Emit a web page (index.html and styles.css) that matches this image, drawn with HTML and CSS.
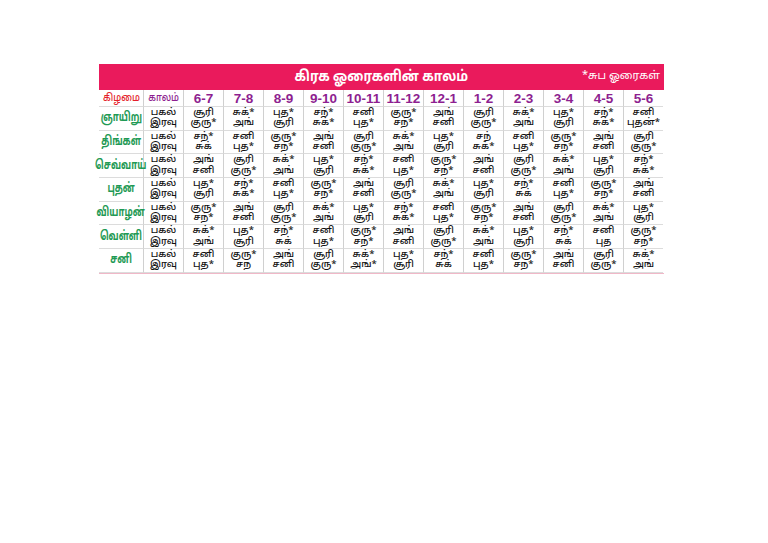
FILE: index.html
```html
<!DOCTYPE html>
<html lang="ta">
<head>
<meta charset="utf-8">
<title>கிரக ஓரைகளின் காலம்</title>
<link rel="stylesheet" href="styles.css">
</head>
<body>
<div class="sheet">
  <div class="banner">
    <span class="title">கிரக ஓரைகளின் காலம்</span>
    <span class="note">*சுப ஓரைகள்</span>
  </div>
  <div class="grid">
    <div class="hd day"><span>கிழமை</span></div>
    <div class="hd kal"><span>காலம்</span></div>
    <div class="hd hr">6-7</div><div class="hd hr">7-8</div><div class="hd hr">8-9</div><div class="hd hr">9-10</div><div class="hd hr">10-11</div><div class="hd hr">11-12</div><div class="hd hr">12-1</div><div class="hd hr">1-2</div><div class="hd hr">2-3</div><div class="hd hr">3-4</div><div class="hd hr">4-5</div><div class="hd hr">5-6</div>

    <div class="dn"><span>ஞாயிறு</span></div><div class="c k">பகல்<br>இரவு</div>
    <div class="c">சூரி<br>குரு*</div><div class="c">சுக்*<br>அங்</div><div class="c">புத*<br>சூரி</div><div class="c">சந்*<br>சுக்*</div><div class="c">சனி<br>புத*</div><div class="c">குரு*<br>சந்*</div><div class="c">அங்<br>சனி</div><div class="c">சூரி<br>குரு*</div><div class="c">சுக்*<br>அங்</div><div class="c">புத*<br>சூரி</div><div class="c">சந்*<br>சுக்*</div><div class="c">சனி<br>புதன்*</div>

    <div class="dn"><span>திங்கள்</span></div><div class="c k">பகல்<br>இரவு</div>
    <div class="c">சந்*<br>சுக்</div><div class="c">சனி<br>புத*</div><div class="c">குரு*<br>சந்*</div><div class="c">அங்<br>சனி</div><div class="c">சூரி<br>குரு*</div><div class="c">சுக்*<br>அங்</div><div class="c">புத*<br>சூரி</div><div class="c">சந்<br>சுக்*</div><div class="c">சனி<br>புத*</div><div class="c">குரு*<br>சந்*</div><div class="c">அங்<br>சனி</div><div class="c">சூரி<br>குரு*</div>

    <div class="dn"><span>செவ்வாய்</span></div><div class="c k">பகல்<br>இரவு</div>
    <div class="c">அங்<br>சனி</div><div class="c">சூரி<br>குரு*</div><div class="c">சுக்*<br>அங்</div><div class="c">புத*<br>சூரி</div><div class="c">சந்*<br>சுக்*</div><div class="c">சனி<br>புத*</div><div class="c">குரு*<br>சந்*</div><div class="c">அங்<br>சனி</div><div class="c">சூரி<br>குரு*</div><div class="c">சுக்*<br>அங்</div><div class="c">புத*<br>சூரி</div><div class="c">சந்*<br>சுக்*</div>

    <div class="dn"><span>புதன்</span></div><div class="c k">பகல்<br>இரவு</div>
    <div class="c">புத*<br>சூரி</div><div class="c">சந்*<br>சுக்*</div><div class="c">சனி<br>புத*</div><div class="c">குரு*<br>சந்*</div><div class="c">அங்<br>சனி</div><div class="c">சூரி<br>குரு*</div><div class="c">சுக்*<br>அங்</div><div class="c">புத*<br>சூரி</div><div class="c">சந்*<br>சுக்</div><div class="c">சனி<br>புத*</div><div class="c">குரு*<br>சந்*</div><div class="c">அங்<br>சனி</div>

    <div class="dn"><span>வியாழன்</span></div><div class="c k">பகல்<br>இரவு</div>
    <div class="c">குரு*<br>சந்*</div><div class="c">அங்<br>சனி</div><div class="c">சூரி<br>குரு*</div><div class="c">சுக்*<br>அங்</div><div class="c">புத*<br>சூரி</div><div class="c">சந்*<br>சுக்*</div><div class="c">சனி<br>புத*</div><div class="c">குரு*<br>சந்*</div><div class="c">அங்<br>சனி</div><div class="c">சூரி<br>குரு*</div><div class="c">சுக்*<br>அங்</div><div class="c">புத*<br>சூரி</div>

    <div class="dn"><span>வெள்ளி</span></div><div class="c k">பகல்<br>இரவு</div>
    <div class="c">சுக்*<br>அங்</div><div class="c">புத*<br>சூரி</div><div class="c">சந்*<br>சுக்</div><div class="c">சனி<br>புத*</div><div class="c">குரு*<br>சந்*</div><div class="c">அங்<br>சனி</div><div class="c">சூரி<br>குரு*</div><div class="c">சுக்*<br>அங்</div><div class="c">புத*<br>சூரி</div><div class="c">சந்*<br>சுக்</div><div class="c">சனி<br>புத</div><div class="c">குரு*<br>சந்*</div>

    <div class="dn"><span>சனி</span></div><div class="c k">பகல்<br>இரவு</div>
    <div class="c">சனி<br>புத*</div><div class="c">குரு*<br>சந</div><div class="c">அங்<br>சனி</div><div class="c">சூரி<br>குரு*</div><div class="c">சுக்*<br>அங்*</div><div class="c">புத*<br>சூரி</div><div class="c">சந்*<br>சுக்</div><div class="c">சனி<br>புத*</div><div class="c">குரு*<br>சந*</div><div class="c">அங்<br>சனி</div><div class="c">சூரி<br>குரு*</div><div class="c">சுக்*<br>அங்</div>
  </div>
</div>
</body>
</html>
```

FILE: styles.css
```css
html, body {
  margin: 0;
  padding: 0;
  background: #ffffff;
}
body {
  font-family: "Noto Sans Tamil", "Lohit Tamil", "Noto Sans", "Liberation Sans", sans-serif;
}
.sheet {
  padding: 64px 0 0 99px;
  width: 565px;
}
.banner {
  height: 26px;
  background: #ea1a5c;
  display: flex;
  align-items: center;
  position: relative;
  justify-content: center;
}
.title {
  color: #ffffff;
  font-weight: 700;
  font-size: 15px;
  display: inline-block;
  transform: scaleX(0.84);
  margin-left: 0;
}
.note {
  position: absolute;
  right: 4px;
  top: 5px;
  color: #ffffff;
  font-size: 11px;
}
.grid {
  display: grid;
  grid-template-columns: 44px 40px repeat(12, 40px);
  grid-template-rows: 17px repeat(7, 23.7px);
  border-bottom: 1px solid #f0b8c8;
}
.grid > div {
  display: flex;
  align-items: center;
  justify-content: center;
  text-align: center;
  border-left: 1px solid #d0d0d0;
  border-bottom: 1px solid #dcdcdc;
  box-sizing: border-box;
  white-space: nowrap;
}
.grid > .hd.day, .grid > .dn {
  border-left: none;
}
.hd {
  font-family: "Liberation Sans", Arial, sans-serif;
  font-weight: 700;
  font-size: 13.5px;
  color: #8e1f90;
}
.hd.day {
  font-family: "Noto Sans Tamil", "Lohit Tamil", sans-serif;
  color: #e41f2c;
  font-weight: 500;
  font-size: 11px;
}
.hd.kal {
  font-family: "Noto Sans Tamil", "Lohit Tamil", sans-serif;
  color: #8e1f90;
  font-weight: 500;
  font-size: 11px;
}
.hd.day span, .hd.kal span {
  display: inline-block;
  transform: scaleX(0.82);
}
.dn {
  color: #1f9a55;
  font-size: 13px;
  font-weight: 700;
}
.dn span {
  display: inline-block;
  transform: scaleX(0.68);
}
.c {
  font-size: 9.5px;
  line-height: 10.5px;
  color: #111111;
  font-weight: 500;
}
```
